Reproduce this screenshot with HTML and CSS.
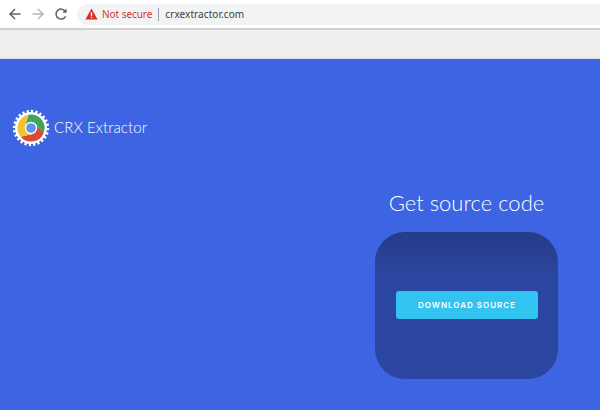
FILE: index.html
```
<!DOCTYPE html>
<html lang="en">
<head>
<meta charset="utf-8">
<title>CRX Extractor</title>
<link rel="stylesheet" href="styles.css">
</head>
<body>
<header class="toolbar">
  <div class="nav-icon">
    <svg width="16" height="16" viewBox="0 0 16 16"><path d="M13.5 8H3.5M8 3 3 8l5 5" fill="none" stroke="#5f6368" stroke-width="1.5"/></svg>
  </div>
  <div class="nav-icon">
    <svg width="16" height="16" viewBox="0 0 16 16"><path d="M2.5 8h10M8 3l5 5-5 5" fill="none" stroke="#b4b6b9" stroke-width="1.5"/></svg>
  </div>
  <div class="nav-icon">
    <svg width="16" height="16" viewBox="0 0 16 16"><path d="M12.6 10.2A5 5 0 1 1 12.4 5.6" fill="none" stroke="#5f6368" stroke-width="1.5"/><path d="M13.6 2.6v4.2H9.4z" fill="#5f6368"/></svg>
  </div>
  <div class="omnibox">
    <svg class="warn" width="13" height="12" viewBox="0 0 14 13"><path d="M7 0.5 13.6 12.5H0.4z" fill="#d93025"/><path d="M6.3 4.6h1.4v4H6.3zM6.3 9.4h1.4v1.4H6.3z" fill="#fff"/></svg>
    <span class="not-secure">Not secure</span>
    <span class="divider"></span>
    <span class="url">crxextractor.com</span>
  </div>
</header>
<div class="bookmarks"></div>
<main class="hero">
  <div class="brand">
    <svg class="logo" width="38" height="38" viewBox="0 0 38 38">
      <circle cx="19" cy="19" r="16" fill="#fff"/>
      <circle cx="19" cy="19" r="16.6" fill="none" stroke="#fff" stroke-width="3.2" pathLength="48" stroke-dasharray="1 1"/>
      <g transform="translate(19 19) scale(1.13) translate(-19 -19)">
        <path d="M16.9 7.2A12 12 0 0 1 30.3 23.1L23.02 15.25 19 19 13.74 17.39Z" fill="#3da55c"/>
        <path d="M30.3 23.1A12 12 0 0 1 9.8 26.7L20.24 24.36 19 19 23.02 15.25Z" fill="#d94a36"/>
        <path d="M9.8 26.7A12 12 0 0 1 16.9 7.2L13.74 17.39 19 19 20.24 24.36Z" fill="#f2c230"/>
        <circle cx="19" cy="19" r="5.5" fill="#fff"/>
        <circle cx="19" cy="19" r="4.3" fill="#5c93ee"/>
      </g>
    </svg>
    <span class="brand-name">CRX Extractor</span>
  </div>
  <section class="source">
    <h1 class="source-title">Get source code</h1>
    <div class="panel">
      <a class="download" href="#">DOWNLOAD SOURCE</a>
    </div>
  </section>
</main>
</body>
</html>
```
FILE: styles.css
```
* { box-sizing: border-box; }
html, body { margin: 0; height: 100%; overflow: hidden; }
body { width: 600px; height: 410px; display: flex; flex-direction: column; background: #3d64e3; font-family: "Noto Sans", "Liberation Sans", sans-serif; }

.toolbar { height: 30px; flex: none; display: flex; align-items: center; padding: 0 0 0 7px; background: #fff; border-bottom: 2px solid #d0d0d0; }
.nav-icon { width: 16px; height: 16px; margin-right: 7px; display: flex; }
.omnibox { flex: 1; height: 21px; margin-left: 1px; padding-left: 8px; display: flex; align-items: center; background: #f1f3f4; border-radius: 11px 0 0 11px; }
.warn { flex: none; margin-right: 4px; }
.not-secure { color: #d93025; font-size: 10px; letter-spacing: -.05px; }
.divider { width: 1px; height: 13px; margin: 0 6px; background: #9aa0a6; }
.url { color: #3c4043; font-size: 10px; letter-spacing: .07px; }

.bookmarks { height: 29px; flex: none; background: #eeeeee; border-bottom: 1px solid #d9dce6; }

.hero { flex: 1; display: flex; flex-direction: column; background: #3d64e3; }
.brand { display: flex; align-items: center; gap: 4px; margin: 50px 0 0 13px; height: 38px; }
.logo { flex: none; margin-left: -1px; }
.brand-name { padding-bottom: 2px; color: #fff; font-family: "Lato", sans-serif; font-weight: 300; font-size: 15px; letter-spacing: .1px; }

.source { align-self: flex-end; width: 183px; margin: 43px 42px 0 0; display: flex; flex-direction: column; align-items: center; }
.source-title { margin: 0 0 16px; color: #fff; font-family: "Lato", sans-serif; font-weight: 300; font-size: 22px; line-height: 26px; white-space: nowrap; }
.panel { width: 183px; height: 147px; padding: 0 0 2px 1px; display: flex; align-items: center; justify-content: center; border-radius: 30px; background: linear-gradient(#263c88, #2b46a0 30%); }
.download { width: 142px; height: 28px; display: flex; align-items: center; justify-content: center; background: #32c3f1; border-radius: 3px; color: #fff; text-decoration: none; font-family: "Inter", sans-serif; font-weight: 600; font-size: 8px; letter-spacing: 1px; }
```
